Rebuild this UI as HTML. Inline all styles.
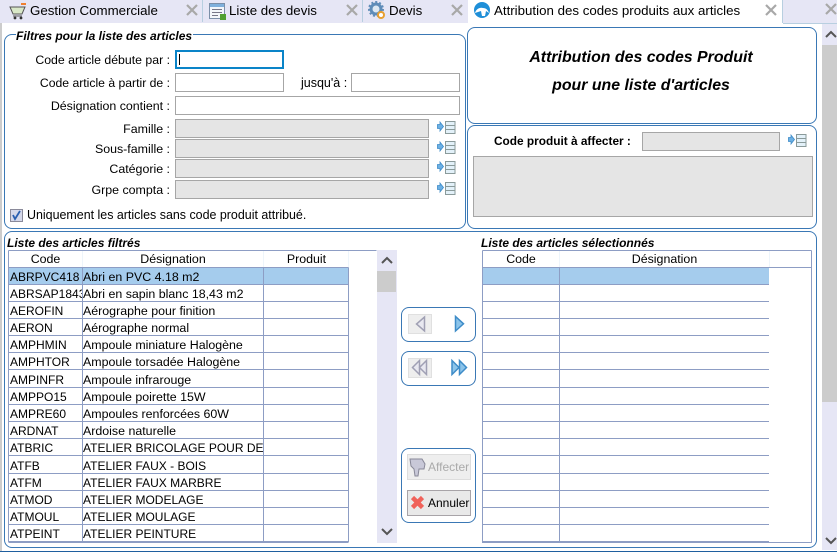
<!DOCTYPE html>
<html><head><meta charset="utf-8"><style>
html,body{margin:0;padding:0;background:#fff}
body{width:837px;height:552px;position:relative;overflow:hidden;font-family:"Liberation Sans",sans-serif;font-size:12px;color:#000}
div{position:absolute;box-sizing:border-box}
.t{white-space:nowrap;line-height:16px;height:16px}
.r{text-align:right;width:170px;left:0;font-size:12.4px}
.tab{font-size:13.3px;top:3px}
.p{border:1px solid #3a78b5;border-radius:8px;background:#fff}
.i{border:1px solid #a6a6a6;background:#fff}
.g{background:#e5e5e5}
.c{overflow:hidden;white-space:nowrap;line-height:17px;height:17px;margin-top:1px}
.m{font-size:12.4px}
.h{text-align:center;top:251px;line-height:17px;height:17px;font-size:12.4px}
.leg{font-weight:bold;font-style:italic}
</style></head><body>
<div style="left:0;top:0;width:837px;height:23px;background:#e6e6f5"></div>
<div style="left:0;top:23px;width:2px;height:528px;background:#ccc"></div>
<div style="left:202px;top:0;width:1px;height:22px;background:#b8cfe0"></div>
<div style="left:362px;top:0;width:1px;height:22px;background:#b8cfe0"></div>
<div style="left:468px;top:0;width:314px;height:24px;background:#fff"></div>
<div style="left:782px;top:0;width:1px;height:23px;background:#b8cfe0"></div>
<div style="left:783px;top:23px;width:54px;height:1px;background:#b8cfe0"></div>
<div class="t tab" style="left:30px">Gestion Commerciale</div>
<div class="t tab" style="left:229px">Liste des devis</div>
<div class="t tab" style="left:389px">Devis</div>
<div class="t tab" style="left:494px">Attribution des codes produits aux articles</div>

<svg style="position:absolute;left:0;top:0" width="837" height="552">
<g stroke="#a8a8a8" stroke-width="2.2" fill="none">
<path d="M187 5l10 10M197 5l-10 10M347 5l10 10M357 5l-10 10M452 5l10 10M462 5l-10 10M766 5l10 10M776 5l-10 10M826 4l10 10M836 4l-10 10"/>
</g>
<path d="M10 7h15l-3 7H13z" fill="#d9e8c8" stroke="#555"/><path d="M13 16h9" stroke="#555"/><circle cx="15" cy="18" r="1.400" fill="#333"/><circle cx="21" cy="18" r="1.400" fill="#333"/><rect x="21" y="3" width="5" height="2" fill="#f08030"/>
<rect x="209.500" y="3.500" width="15" height="15" fill="#f3f6fa" stroke="#7c8fa8"/><rect x="210" y="4" width="14" height="3" fill="#7fb0dc"/><path d="M212 9.500h10M212 12.500h10M212 15.500h6" stroke="#778"/><rect x="220" y="14" width="6" height="6" fill="#50a030"/>
<circle cx="376" cy="9" r="5" fill="#dde8f2" stroke="#5f8cb8" stroke-width="3"/><circle cx="376" cy="9" r="7" fill="none" stroke="#5f8cb8" stroke-width="2" stroke-dasharray="2 2"/><circle cx="381" cy="15" r="3" fill="#fff" stroke="#e8a030" stroke-width="2"/>
<circle cx="482" cy="10" r="8" fill="#1f8fd8"/><path d="M475 13c1-4 5-6 8-5 3 0 5 2 6 5l-3-2-1 5h-3l-1-5-3 1z" fill="#fff"/>
</svg>

<!-- filter panel -->
<div class="p" style="left:4px;top:34px;width:462px;height:195px"></div>
<div class="t leg" style="left:16px;top:28px;background:#fff;height:14px;line-height:16px;padding-right:1px">Filtres pour la liste des articles</div>
<div class="t r" style="top:52px;font-size:12.3px">Code article débute par :</div>
<div class="t r" style="top:75px;font-size:12.2px">Code article à partir de :</div>
<div class="t r" style="top:98px">Désignation contient :</div>
<div class="t r" style="top:121px">Famille :</div>
<div class="t r" style="top:141px">Sous-famille :</div>
<div class="t r" style="top:161px">Catégorie :</div>
<div class="t r" style="top:182px">Grpe compta :</div>
<div class="t" style="left:301px;top:75px;font-size:12.5px">jusqu'à :</div>
<div class="i" style="left:175px;top:50px;width:109px;height:19px;border:2px solid #0a84c8"><div style="left:2px;top:2px;width:1px;height:11px;background:#000"></div></div>
<div class="i" style="left:175px;top:73px;width:109px;height:19px"></div>
<div class="i" style="left:351px;top:73px;width:109px;height:19px"></div>
<div class="i" style="left:175px;top:96px;width:285px;height:19px"></div>
<div class="i g" style="left:175px;top:119px;width:254px;height:19px"></div>
<div class="i g" style="left:175px;top:139px;width:254px;height:19px"></div>
<div class="i g" style="left:175px;top:159px;width:254px;height:19px"></div>
<div class="i g" style="left:175px;top:180px;width:254px;height:19px"></div>
<div style="left:10px;top:209px;width:13px;height:13px;background:#d5d8ea;border:1px solid #8a8a9a"></div>
<div class="t" style="left:27px;top:207px;font-size:12.45px">Uniquement les articles sans code produit attribué.</div>

<!-- title panel -->
<div class="p" style="left:467px;top:27px;width:350px;height:97px"></div>
<div class="t" style="left:466px;top:49px;width:350px;text-align:center;font:italic bold 15.900px/18px 'Liberation Sans',sans-serif;height:18px">Attribution des codes Produit</div>
<div class="t" style="left:466px;top:77px;width:350px;text-align:center;font:italic bold 15.900px/18px 'Liberation Sans',sans-serif;height:18px">pour une liste d'articles</div>

<!-- code panel -->
<div class="p" style="left:467px;top:125px;width:350px;height:104px"></div>
<div class="t" style="left:494px;top:133px;font-weight:bold;font-size:11.850px">Code produit à affecter :</div>
<div class="i g" style="left:642px;top:132px;width:138px;height:19px"></div>
<div class="i g" style="left:473px;top:156px;width:340px;height:61px"></div>

<!-- lists panel -->
<div class="p" style="left:4px;top:231px;width:813px;height:317px"></div>
<div class="t leg" style="left:7px;top:235px">Liste des articles filtrés</div>
<div class="t leg" style="left:481px;top:235px">Liste des articles sélectionnés</div>

<div style="left:9px;top:268px;width:339px;height:16px;background:#a5cced"></div>
<div style="left:483px;top:268px;width:286px;height:16px;background:#a5cced"></div>

<svg style="position:absolute;left:0;top:0" width="837" height="552">
<g fill="none" stroke="#8d9dc4" shape-rendering="crispEdges">
<path d="M8.500 250.500H376.500M8.500 267.500H348.500M8.500 250.500V542M8.500 542.500H348.500M348.500 267.500V542"/>
<path d="M82.500 267V541M263.500 267V541" />
<path d="M9 284.500H348M9 301.500H348M9 318.500H348M9 335.500H348M9 352.500H348M9 369.500H348M9 387.500H348M9 404.500H348M9 421.500H348M9 438.500H348M9 455.500H348M9 473.500H348M9 490.500H348M9 507.500H348M9 524.500H348M9 541.500H348"/>
<path d="M482.500 250.500H811.500M482.500 267.500H811.500M482.500 250.500V542.500H811.500V250.500"/>
<path d="M559.500 267V542"/>
<path d="M483 284.500H769M483 301.500H769M483 318.500H769M483 335.500H769M483 352.500H769M483 369.500H769M483 387.500H769M483 404.500H769M483 421.500H769M483 438.500H769M483 455.500H769M483 473.500H769M483 490.500H769M483 507.500H769M483 524.500H769M483 541.500H769"/>
</g>
<g stroke="#eef5fb" shape-rendering="crispEdges"><path d="M82.500 251V267M263.500 251V267M348.500 251V267M559.500 251V267M769.500 251V267"/></g>
</svg>

<div class="h" style="left:9px;width:73px">Code</div>
<div class="h" style="left:83px;width:180px">Désignation</div>
<div class="h" style="left:264px;width:85px">Produit</div>
<div class="h" style="left:483px;width:76px">Code</div>
<div class="h" style="left:560px;width:209px">Désignation</div>

<div class="c" style="left:10px;top:268px;width:72px">ABRPVC418</div><div class="c m" style="left:83px;top:268px;width:180px">Abri en PVC 4.18 m2</div>
<div class="c" style="left:10px;top:285px;width:72px">ABRSAP1843</div><div class="c m" style="left:83px;top:285px;width:180px">Abri en sapin blanc 18,43 m2</div>
<div class="c" style="left:10px;top:302px;width:72px">AEROFIN</div><div class="c m" style="left:83px;top:302px;width:180px">Aérographe pour finition</div>
<div class="c" style="left:10px;top:319px;width:72px">AERON</div><div class="c m" style="left:83px;top:319px;width:180px">Aérographe normal</div>
<div class="c" style="left:10px;top:336px;width:72px">AMPHMIN</div><div class="c m" style="left:83px;top:336px;width:180px">Ampoule miniature Halogène</div>
<div class="c" style="left:10px;top:353px;width:72px">AMPHTOR</div><div class="c m" style="left:83px;top:353px;width:180px">Ampoule torsadée Halogène</div>
<div class="c" style="left:10px;top:371px;width:72px">AMPINFR</div><div class="c m" style="left:83px;top:371px;width:180px">Ampoule infrarouge</div>
<div class="c" style="left:10px;top:388px;width:72px">AMPPO15</div><div class="c m" style="left:83px;top:388px;width:180px">Ampoule poirette 15W</div>
<div class="c" style="left:10px;top:405px;width:72px">AMPRE60</div><div class="c m" style="left:83px;top:405px;width:180px">Ampoules renforcées 60W</div>
<div class="c" style="left:10px;top:422px;width:72px">ARDNAT</div><div class="c m" style="left:83px;top:422px;width:180px">Ardoise naturelle</div>
<div class="c" style="left:10px;top:439px;width:72px">ATBRIC</div><div class="c" style="left:83px;top:439px;width:180px">ATELIER BRICOLAGE POUR DEBUTANT</div>
<div class="c" style="left:10px;top:457px;width:72px">ATFB</div><div class="c" style="left:83px;top:457px;width:180px">ATELIER FAUX - BOIS</div>
<div class="c" style="left:10px;top:474px;width:72px">ATFM</div><div class="c" style="left:83px;top:474px;width:180px">ATELIER FAUX MARBRE</div>
<div class="c" style="left:10px;top:491px;width:72px">ATMOD</div><div class="c" style="left:83px;top:491px;width:180px">ATELIER MODELAGE</div>
<div class="c" style="left:10px;top:508px;width:72px">ATMOUL</div><div class="c" style="left:83px;top:508px;width:180px">ATELIER MOULAGE</div>
<div class="c" style="left:10px;top:525px;width:72px">ATPEINT</div><div class="c" style="left:83px;top:525px;width:180px">ATELIER PEINTURE</div>

<!-- inner scrollbar -->
<div style="left:377px;top:250px;width:20px;height:293px;background:#e6e6f5"></div>
<div style="left:377px;top:271px;width:19px;height:21px;background:#ccc"></div>
<!-- main scrollbar -->
<div style="left:822px;top:24px;width:15px;height:526px;background:#e6e6f5"></div>
<div style="left:822px;top:45px;width:15px;height:357px;background:#ccc"></div>

<!-- nav boxes -->
<div class="p" style="left:401px;top:307px;width:75px;height:35px"></div>
<div class="p" style="left:401px;top:351px;width:75px;height:35px"></div>
<div class="p" style="left:401px;top:448px;width:75px;height:75px"></div>
<div style="left:408px;top:314px;width:24px;height:20px;background:#eee;border:1px solid #e0e0e0"></div>
<div style="left:408px;top:358px;width:24px;height:20px;background:#eee;border:1px solid #e0e0e0"></div>
<div style="left:407px;top:454px;width:64px;height:26px;background:#eee;border:1px solid #ddd"></div>
<div style="left:407px;top:490px;width:64px;height:26px;background:#e9e9e9;border:1px solid #a8a4a8"></div>
<div class="t" style="left:428px;top:459px;color:#aaa">Affecter</div>
<div class="t" style="left:428px;top:495px">Annuler</div>

<svg style="position:absolute;left:0;top:0" width="837" height="552">
<g fill="none" stroke="#555" stroke-width="2">
<path d="M382 263l5-5 5 5M382 529l5 5 5-5M826 37l5-5 5 5M826 538l5 5 5-5"/>
</g>
<path d="M424.500 317v14l-8-7z" fill="#e8e8f0" stroke="#a0a0b4" stroke-width="1.500"/>
<path d="M455.500 316.500v14.500l8-7.200z" fill="#8cc4ea" stroke="#3e8cc8" stroke-width="1.500"/>
<path d="M419.500 360.500v14l-7-7zM426.500 360.500v14l-7-7z" fill="#e8e8f0" stroke="#a0a0b4" stroke-width="1.500"/>
<path d="M452 360.500v14l7-7zM459.500 360.500v14l7-7z" fill="#8cc4ea" stroke="#3e8cc8" stroke-width="1.500"/>
<path d="M410 459h12l3 5-1 5h-5l-1 7h-3l-1-7-3-3z" fill="#c8c8d8" stroke="#888898"/>
<path d="M412.500 497.500l10 10M422.500 497.500l-10 10" stroke="#f0625a" stroke-width="4.500" fill="none"/>
<path d="M13 215l2 4 5-8" fill="none" stroke="#2a5fb0" stroke-width="1.800"/>
<defs><g id="li"><path d="M0.500 3.500h2.500V1l3.500 4.500L3 10V7.500H0.500z" fill="#6cb0e4" stroke="#3e8cc8" stroke-width="0.800"/><rect x="8.500" y="0.500" width="9.500" height="12" fill="#e3f1f9" stroke="#8a9a9a"/><path d="M9 4.500h9M9 8.500h9" stroke="#8a9a9a"/></g></defs>
<use href="#li" x="437" y="121"/><use href="#li" x="437" y="141"/><use href="#li" x="437" y="161"/><use href="#li" x="437" y="182"/><use href="#li" x="788" y="134"/>
</svg>
<div style="left:0;top:551px;width:837px;height:1px;background:#1f5f9f"></div>
</body></html>
